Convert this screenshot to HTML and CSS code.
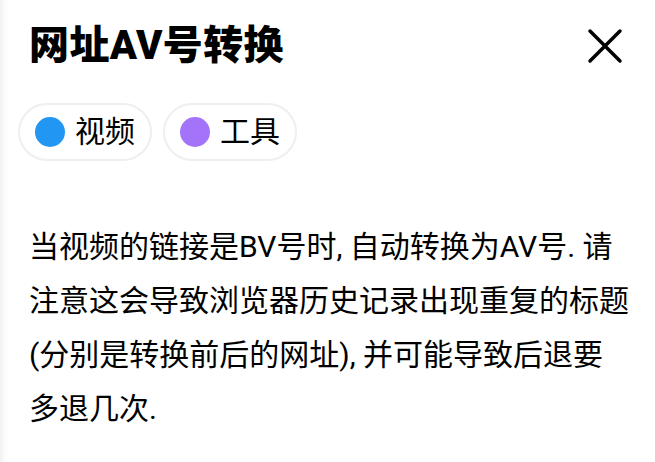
FILE: index.html
```html
<!DOCTYPE html>
<html lang="zh-CN">
<head>
<meta charset="utf-8">
<title>网址AV号转换</title>
<link rel="stylesheet" href="styles.css">
</head>
<body>
<div class="panel">
  <div class="header">
    <h1 class="title">网址AV号转换</h1>
    <button class="close" aria-label="关闭">
      <svg width="36" height="36" viewBox="0 0 36 36">
        <path d="M3 3 L33 33 M33 3 L3 33" stroke="#000" stroke-width="3.5" stroke-linecap="round" fill="none"/>
      </svg>
    </button>
  </div>
  <div class="tags">
    <span class="tag"><span class="dot dot-blue"></span><span class="tag-text">视频</span></span>
    <span class="tag"><span class="dot dot-purple"></span><span class="tag-text">工具</span></span>
  </div>
  <p class="desc">当视频的链接是BV号时, 自动转换为AV号. 请注意这会导致浏览器历史记录出现重复的标题(分别是转换前后的网址), 并可能导致后退要多退几次.</p>
</div>
</body>
</html>
```

FILE: styles.css
```css
html, body {
  margin: 0;
  padding: 0;
  background: #fff;
}
body {
  font-family: Roboto, "Noto Sans CJK SC", sans-serif;
  color: #000;
  width: 655px;
  height: 462px;
  overflow: hidden;
  background: linear-gradient(to right, #f1f1f1 0px, #fafafa 4px, #fff 9px);
}
.panel {
  display: flex;
  flex-direction: column;
}
.header {
  display: flex;
  justify-content: space-between;
  align-items: center;
  padding: 22px 32px 0 29px;
}
.title {
  margin: 0;
  font-size: 40px;
  line-height: 48px;
  font-weight: 900;
  letter-spacing: 0.4px;
  color: #000;
}
.close {
  border: 0;
  background: none;
  padding: 0;
  width: 36px;
  height: 36px;
  display: flex;
}
.tags {
  display: flex;
  gap: 11px;
  padding: 33px 0 0 18px;
}
.tag {
  display: flex;
  align-items: center;
  gap: 10px;
  height: 58px;
  box-sizing: border-box;
  padding: 0 15px;
  border: 2px solid #efefef;
  border-radius: 29px;
  background: #fff;
}
.dot {
  width: 30px;
  height: 30px;
  border-radius: 50%;
  flex: none;
}
.dot-blue { background: #2196f3; }
.dot-purple { background: #a374f9; }
.tag-text {
  font-size: 30px;
  line-height: 36px;
  color: #000;
}
.desc {
  margin: 59px 0 0 0;
  padding: 0 0 0 29px;
  width: 601px;
  font-size: 30px;
  line-height: 54px;
  color: #000;
}
```
